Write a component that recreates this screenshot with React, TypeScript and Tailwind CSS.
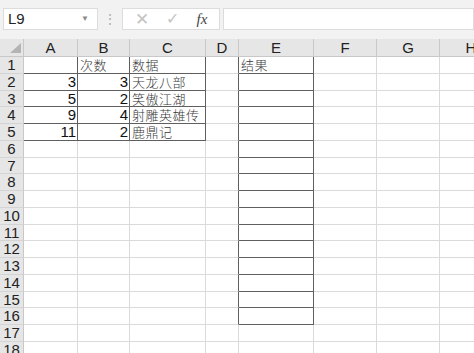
import { Fragment } from 'react'

// Столбцы: заголовок строк + A..H
const COLS = ['A', 'B', 'C', 'D', 'E', 'F', 'G', 'H']
const COL_WIDTHS = '24px 54px 52px 76px 33px 75px 63px 63px 63px'
const ROW_COUNT = 18

type Cell = { text: string; align?: 'left' | 'right' }

const DATA: Record<string, Cell> = {
  B1: { text: '次数' },
  C1: { text: '数据' },
  A2: { text: '3', align: 'right' },
  B2: { text: '3', align: 'right' },
  C2: { text: '天龙八部' },
  A3: { text: '5', align: 'right' },
  B3: { text: '2', align: 'right' },
  C3: { text: '笑傲江湖' },
  A4: { text: '9', align: 'right' },
  B4: { text: '4', align: 'right' },
  C4: { text: '射雕英雄传' },
  A5: { text: '11', align: 'right' },
  B5: { text: '2', align: 'right' },
  C5: { text: '鹿鼎记' },
  E1: { text: '结果' },
}

// Диапазоны с рамкой
function boxed(r: number, c: number): boolean {
  if (r >= 1 && r <= 5 && c >= 0 && c <= 2) return true
  if (r >= 1 && r <= 16 && c === 4) return true
  return false
}

function GridCell({ r, c }: { r: number; c: number }) {
  const key = `${COLS[c]}${r}`
  const cell = DATA[key]
  const darkRight = boxed(r, c) || boxed(r, c + 1)
  const darkBottom = boxed(r, c) || boxed(r + 1, c)
  const isCjk = cell && cell.align !== 'right'
  return (
    <div
      className={[
        'h-[16.75px] border-r border-b overflow-hidden whitespace-nowrap leading-[16px]',
        darkRight ? 'border-r-[#5f5f5f]' : 'border-r-[#dadada]',
        darkBottom ? 'border-b-[#5f5f5f]' : 'border-b-[#dadada]',
        cell?.align === 'right' ? 'text-right pr-[1px]' : 'text-left pl-[2px]',
        isCjk
          ? "text-[13px] tracking-[0.5px] text-[#3a3a3a] font-['Noto_Sans_CJK_SC',sans-serif] font-light"
          : "text-[15px] text-[#111] font-['Liberation_Sans',Arial,sans-serif]",
      ].join(' ')}
    >
      {cell?.text}
    </div>
  )
}

export default function App() {
  return (
    <div className="w-[474px] h-[353px] overflow-hidden bg-white font-['Liberation_Sans',Arial,sans-serif]">
      {/* Панель формул */}
      <div className="h-[39px] bg-[#f2f2f2] flex items-start pt-[8px] pl-[3px] gap-0">
        <div className="w-[95px] h-[22px] bg-white border border-[#dcdcdc] flex items-center justify-between pl-[4px] pr-[8px]">
          <span className="text-[15px] text-[#222]">L9</span>
          <span className="text-[8px] text-[#8a8a8a]">▼</span>
        </div>
        <div className="w-[24px] h-[22px] flex items-center justify-center text-[#b0b0b0] text-[14px]">⋮</div>
        <div className="w-[98px] h-[22px] bg-white border border-[#dcdcdc] flex items-center">
          <span className="w-[34px] text-center text-[17px] text-[#c4c4c4] leading-none pl-[4px]">✕</span>
          <span className="w-[30px] text-center text-[16px] text-[#c4c4c4] leading-none">✓</span>
          <span className="w-[30px] text-center text-[15px] italic text-[#444] font-['Liberation_Serif',serif]">fx</span>
        </div>
        <div className="flex-1 h-[22px] ml-[3px] bg-white border border-[#dcdcdc]" />
      </div>

      {/* Сетка */}
      <div className="grid" style={{ gridTemplateColumns: COL_WIDTHS }}>
        {/* Заголовки столбцов */}
        <div className="h-[18px] bg-[#e6e6e6] border-r border-b border-[#c8c8c8] relative">
          <div className="absolute right-[2px] bottom-[3px] w-0 h-0 border-l-[11px] border-l-transparent border-b-[10px] border-b-[#b4b4b4]" />
        </div>
        {COLS.map((col) => (
          <div
            key={col}
            className="h-[18px] bg-[#e6e6e6] border-r border-b border-r-[#c8c8c8] border-b-[#c8c8c8] text-center text-[15px] leading-[18px] text-[#222] overflow-hidden"
          >
            {col}
          </div>
        ))}

        {Array.from({ length: ROW_COUNT }, (_, i) => i + 1).map((r) => (
          <Fragment key={r}>
            <div className="h-[16.75px] bg-[#e6e6e6] border-r border-b border-r-[#c8c8c8] border-b-[#d4d4d4] text-center text-[15px] leading-[16px] text-[#222]">
              {r}
            </div>
            {COLS.map((_, c) => (
              <GridCell key={c} r={r} c={c} />
            ))}
          </Fragment>
        ))}
      </div>
    </div>
  )
}
